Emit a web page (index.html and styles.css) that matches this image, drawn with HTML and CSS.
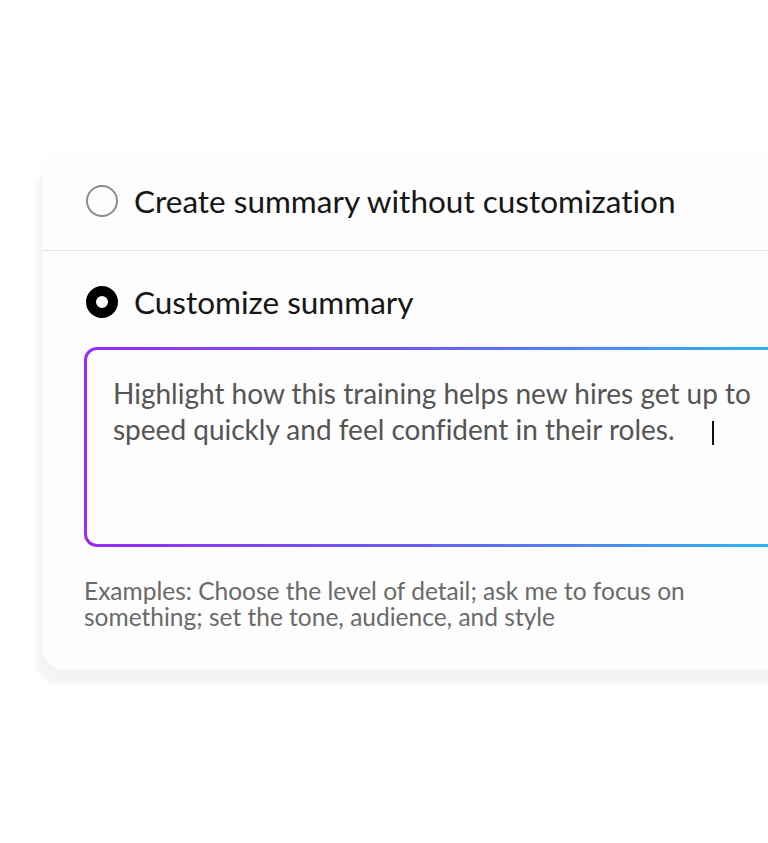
FILE: index.html
```html
<!DOCTYPE html>
<html lang="en">
<head>
<meta charset="utf-8">
<link rel="stylesheet" href="styles.css">
</head>
<body>
<div class="page">
  <div class="card">
    <div class="option option-first">
      <span class="radio"></span>
      <span class="label">Create summary without customization</span>
    </div>
    <div class="custom">
      <div class="option option-second">
        <span class="radio radio-on"></span>
        <span class="label">Customize summary</span>
      </div>
      <div class="input">
        <p class="input-text">Highlight how this training helps new hires get up to speed quickly and feel confident in their roles.<span class="caret"></span></p>
      </div>
      <p class="hint">Examples: Choose the level of detail; ask me to focus on something; set the tone, audience, and style</p>
    </div>
  </div>
</div>
</body>
</html>
```
FILE: styles.css
```css
html, body {
  margin: 0;
  padding: 0;
  background: #ffffff;
  overflow: hidden;
}
.page {
  width: 768px;
  height: 843px;
  overflow: hidden;
  padding-top: 152px;
  box-sizing: border-box;
  font-family: Lato, "Noto Sans", sans-serif;
  font-variant-ligatures: none;
}
.card {
  margin-left: 42px;
  width: 800px;
  background: #fdfdfd;
  border-radius: 22px;
  box-shadow: -6px 14px 4px rgba(0, 0, 0, 0.045), 0 0 3px rgba(0, 0, 0, 0.04);
}
.option {
  display: flex;
  align-items: center;
  gap: 16px;
}
.option-first {
  height: 98px;
  padding-left: 44px;
  border-bottom: 1.5px solid #e2e2e2;
}
.radio {
  width: 32px;
  height: 32px;
  box-sizing: border-box;
  border-radius: 50%;
  border: 2.5px solid #8c8c8c;
  flex: none;
}
.radio-on {
  border: 10.5px solid #000000;
  background: #ffffff;
}
.label {
  font-size: 31.5px;
  line-height: 38px;
  color: #161616;
}
.custom {
  padding: 32px 0 40px 42px;
}
.option-second {
  padding-left: 2px;
  margin-bottom: 26px;
}
.input {
  width: 720px;
  height: 200px;
  box-sizing: border-box;
  border: 3px solid transparent;
  border-radius: 13px;
  background: linear-gradient(#fdfdfd, #fdfdfd) padding-box,
              linear-gradient(90deg, #9a2bf6 0%, #6a5cf6 45%, #2fb4f3 95%) border-box;
  padding: 25px 30px 0 26px;
}
.input-text {
  margin: 0;
  width: 650px;
  font-size: 28px;
  line-height: 36px;
  color: #555555;
}
.caret {
  display: inline-block;
  width: 2px;
  height: 24px;
  background: #111111;
  margin-left: 37px;
  vertical-align: -5px;
}
.hint {
  margin: 31px 0 0 0;
  width: 640px;
  font-size: 24.5px;
  line-height: 26px;
  color: #6a6a6a;
}
```
